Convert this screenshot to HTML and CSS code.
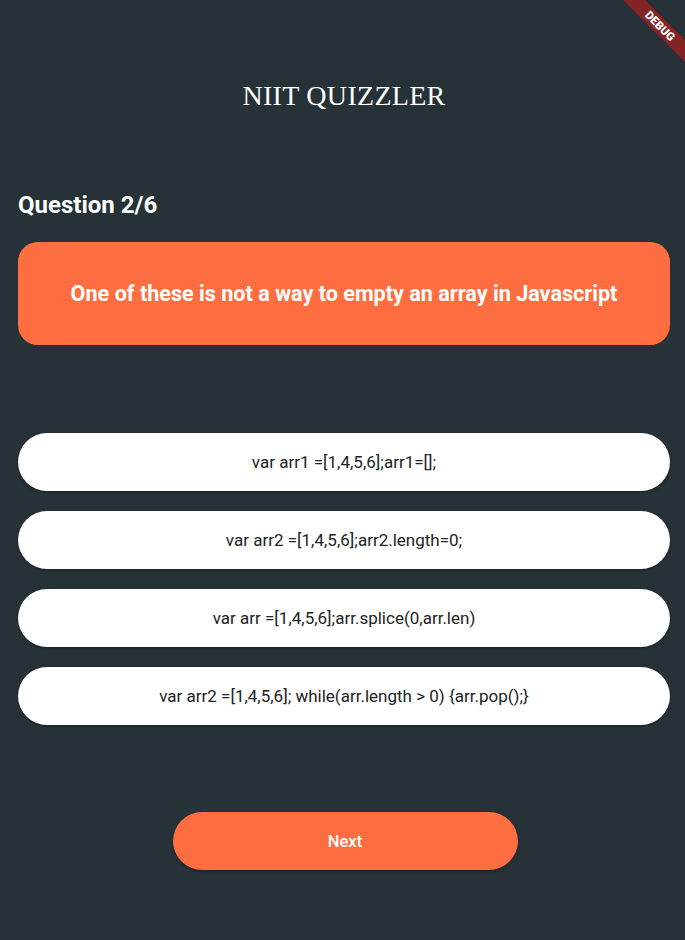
FILE: index.html
```html
<!DOCTYPE html>
<html lang="en">
<head>
<meta charset="utf-8">
<title>NIIT Quizzler</title>
<link rel="stylesheet" href="styles.css">
</head>
<body>
<div class="screen">
  <h1 class="app-title">NIIT QUIZZLER</h1>
  <h2 class="q-count">Question 2/6</h2>
  <div class="q-card">One of these is not a way to empty an array in Javascript</div>
  <div class="options">
    <button class="option">var arr1 =[1,4,5,6];arr1=[];</button>
    <button class="option">var arr2 =[1,4,5,6];arr2.length=0;</button>
    <button class="option">var arr =[1,4,5,6];arr.splice(0,arr.len)</button>
    <button class="option">var arr2 =[1,4,5,6]; while(arr.length &gt; 0) {arr.pop();}</button>
  </div>
  <div class="next-row">
    <button class="next">Next</button>
  </div>
  <div class="debug-banner">DEBUG</div>
</div>
</body>
</html>
```
FILE: styles.css
```css
html, body {
  margin: 0;
  padding: 0;
  background: #263238;
}
.screen {
  position: relative;
  width: 685px;
  height: 940px;
  overflow: hidden;
  box-sizing: border-box;
  padding: 80px 15px 0 18px;
  font-family: Roboto, "Liberation Sans", sans-serif;
}
.app-title {
  margin: 0;
  text-align: center;
  font-family: "Liberation Serif", "DejaVu Serif", serif;
  font-weight: normal;
  font-size: 28px;
  line-height: 32px;
  color: #ffffff;
  letter-spacing: 0.3px;
}
.q-count {
  margin: 79px 0 0 0;
  font-size: 24px;
  line-height: 28px;
  font-weight: 700;
  color: #ffffff;
}
.q-card {
  margin-top: 23px;
  height: 103px;
  display: flex;
  align-items: center;
  justify-content: center;
  background: #ff6e40;
  border-radius: 20px;
  color: #ffffff;
  font-size: 21.6px;
  font-weight: 700;
  text-align: center;
}
.options {
  margin-top: 88px;
  display: flex;
  flex-direction: column;
  gap: 20px;
}
.option {
  height: 58px;
  border: none;
  border-radius: 29px;
  background: #ffffff;
  color: #222222;
  font-family: Roboto, "Liberation Sans", sans-serif;
  font-size: 17px;
  box-shadow: 0 1px 3px rgba(0,0,0,0.35);
  padding: 0;
}
.next-row {
  margin-top: 87px;
  display: flex;
  justify-content: center;
  padding-left: 2px;
}
.next {
  width: 345px;
  height: 58px;
  border: none;
  border-radius: 29px;
  background: #ff6e40;
  color: #ffffff;
  font-family: Roboto, "Liberation Sans", sans-serif;
  font-size: 16.5px;
  font-weight: 500;
  box-shadow: 0 1px 3px rgba(0,0,0,0.35);
}
.debug-banner {
  position: absolute;
  left: 608px;
  top: 18px;
  width: 104px;
  height: 16px;
  line-height: 16px;
  transform: rotate(45deg);
  background: rgba(183, 28, 28, 0.63);
  color: #ffffff;
  font-size: 11.5px;
  font-weight: 900;
  text-align: center;
  box-shadow: 0 0 2px rgba(0,0,0,0.3);
}
```
